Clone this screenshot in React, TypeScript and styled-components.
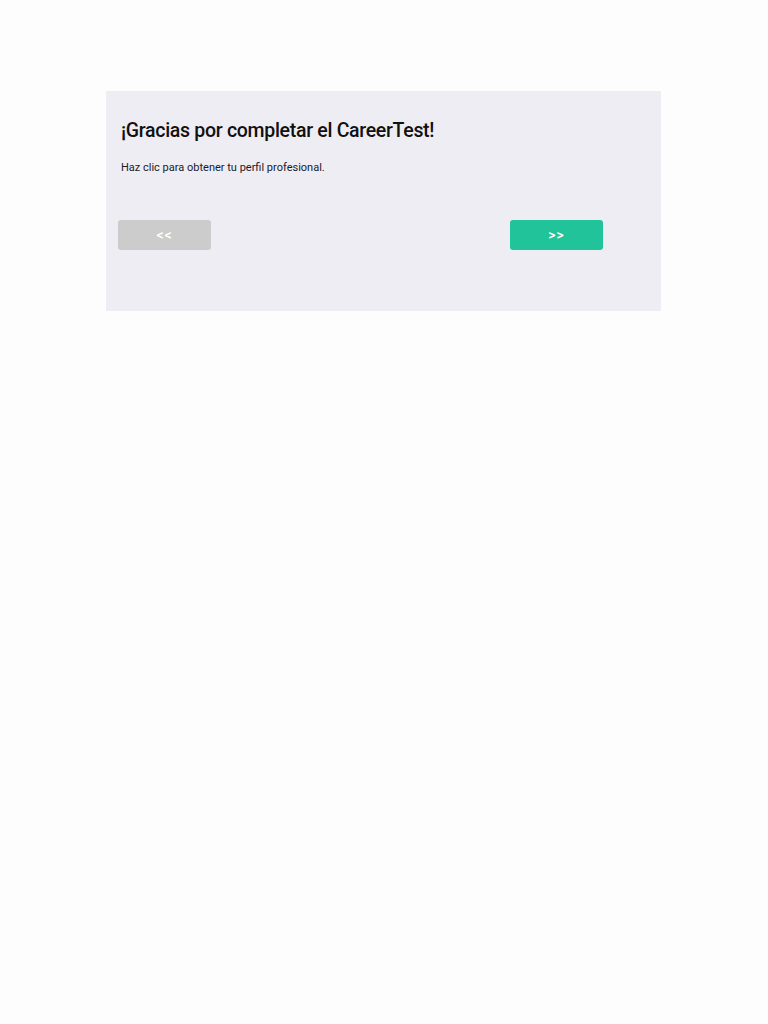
import React from "react";
import styled, { createGlobalStyle } from "styled-components";

const Global = createGlobalStyle`
  html, body { margin: 0; padding: 0; background: #fdfdfd; }
  body { font-family: Roboto, "Liberation Sans", sans-serif; }
`;

const Page = styled.div`
  padding: 91px 107px 0 106px;
`;

const Panel = styled.section`
  background: #eeedf3;
  height: 220px;
  box-sizing: border-box;
  padding: 20px 0 0 0;
  display: flex;
  flex-direction: column;
`;

const Title = styled.h1`
  margin: 0 0 0 15px;
  font-size: 19.5px;
  font-weight: 500;
  line-height: 40px;
  color: #111;
  letter-spacing: -0.3px;
`;

const Subtitle = styled.p`
  margin: 9px 0 0 15px;
  font-size: 11px;
  line-height: 16px;
  color: #1a1a2a;
`;

const Actions = styled.div`
  display: flex;
  justify-content: space-between;
  margin: 44px 58px 0 12px;
`;

const NavButton = styled.button<{ $primary?: boolean }>`
  width: 93px;
  height: 30px;
  border: none;
  border-radius: 3px;
  background: ${(p) => (p.$primary ? "#20c39a" : "#cccccc")};
  color: #ffffff;
  font-family: Roboto, "Liberation Sans", sans-serif;
  font-size: 14px;
  font-weight: 500;
  letter-spacing: 1px;
  padding: 0;
`;

export default function App() {
  return (
    <>
      <Global />
      <Page>
        <Panel>
          <Title>¡Gracias por completar el CareerTest!</Title>
          <Subtitle>Haz clic para obtener tu perfil profesional.</Subtitle>
          <Actions>
            <NavButton>&lt;&lt;</NavButton>
            <NavButton $primary>&gt;&gt;</NavButton>
          </Actions>
        </Panel>
      </Page>
    </>
  );
}
